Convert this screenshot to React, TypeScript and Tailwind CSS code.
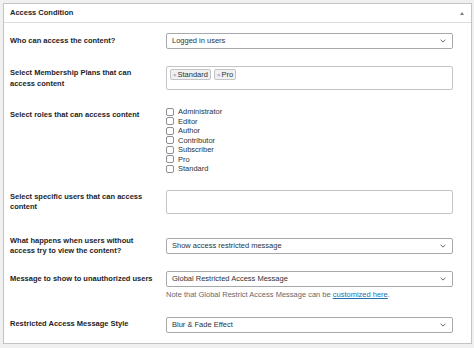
import React from "react";

const font = { fontFamily: '"Liberation Sans", Arial, sans-serif' };

function Chevron() {
  return (
    <svg width="6" height="4" viewBox="0 0 6 4" className="shrink-0">
      <path d="M0.6 0.8 L3 3.1 L5.4 0.8" fill="none" stroke="#50575e" strokeWidth="0.9" />
    </svg>
  );
}

function Select({ value }: { value: string }) {
  return (
    <div className="w-[287px] h-[16px] border border-[#a7aaad] rounded-[2px] bg-white flex items-center justify-between pl-[5px] pr-[6px]">
      <span className="text-[7.5px] text-[#2c3338] leading-none">{value}</span>
      <Chevron />
    </div>
  );
}

function Label({ children, className = "" }: { children: React.ReactNode; className?: string }) {
  return (
    <div className={"w-[156px] shrink-0 text-[7.5px] font-bold text-[#1d2327] leading-[10.5px] pr-[10px] " + className}>
      {children}
    </div>
  );
}

function Tag({ text }: { text: string }) {
  return (
    <span className="inline-flex items-center h-[11px] px-[2px] border border-[#c3c4c7] bg-[#f0f0f1] rounded-[2px] text-[7.5px] text-[#2c3338] leading-none mr-[3px]">
      <span className="text-[6px] text-[#8c8f94] mr-[1px]">×</span>
      {text}
    </span>
  );
}

function Checkbox({ label }: { label: string }) {
  return (
    <div className="flex items-center h-[9.5px]">
      <span className="w-[8px] h-[8px] border border-[#8c8f94] rounded-[2px] bg-white mr-[4px]" />
      <span className="text-[7.5px] text-[#2c3338] leading-none">{label}</span>
    </div>
  );
}

export default function App() {
  return (
    <div className="w-[474px] h-[348px] bg-[#f0f0f1] pt-[3px] pl-[3px]" style={font}>
      <div className="w-[469px] h-[341px] bg-white border border-[#c3c4c7]">
        <div className="h-[19px] border-b border-[#dcdcde] flex items-center justify-between pl-[6px] pr-[7px]">
          <span className="text-[7.5px] font-semibold text-[#1d2327]">Access Condition</span>
          <svg width="4" height="3" viewBox="0 0 4 3">
            <path d="M0 3 L2 0 L4 3 Z" fill="#787c82" />
          </svg>
        </div>
        <div className="pl-[6px]">
          <div className="flex items-center mt-[10px]">
            <Label>Who can access the content?</Label>
            <Select value="Logged in users" />
          </div>
          <div className="flex items-start mt-[17px]">
            <Label className="pt-[2px]">Select Membership Plans that can access content</Label>
            <div className="w-[287px] h-[24px] border border-[#c3c4c7] rounded-[2px] pt-[2px] pl-[3px] flex items-start">
              <Tag text="Standard" />
              <Tag text="Pro" />
            </div>
          </div>
          <div className="flex items-start mt-[17px]">
            <Label className="pt-[3px]">Select roles that can access content</Label>
            <div>
              {["Administrator", "Editor", "Author", "Contributor", "Subscriber", "Pro", "Standard"].map((r) => (
                <Checkbox key={r} label={r} />
              ))}
            </div>
          </div>
          <div className="flex items-start mt-[16px]">
            <Label className="pt-[2px]">Select specific users that can access content</Label>
            <div className="w-[287px] h-[24px] border border-[#c3c4c7] rounded-[2px]" />
          </div>
          <div className="flex items-center mt-[22px]">
            <Label>What happens when users without access try to view the content?</Label>
            <Select value="Show access restricted message" />
          </div>
          <div className="flex items-start mt-[14px]">
            <Label className="pt-[3px]">Message to show to unauthorized users</Label>
            <div>
              <Select value="Global Restricted Access Message" />
              <div className="text-[7.5px] text-[#646970] mt-[3px] leading-[10px]">
                Note that Global Restrict Access Message can be{" "}
                <a className="text-[#2271b1] underline">customized here</a>.
              </div>
            </div>
          </div>
          <div className="flex items-center mt-[17px]">
            <Label>Restricted Access Message Style</Label>
            <Select value="Blur & Fade Effect" />
          </div>
        </div>
      </div>
    </div>
  );
}
